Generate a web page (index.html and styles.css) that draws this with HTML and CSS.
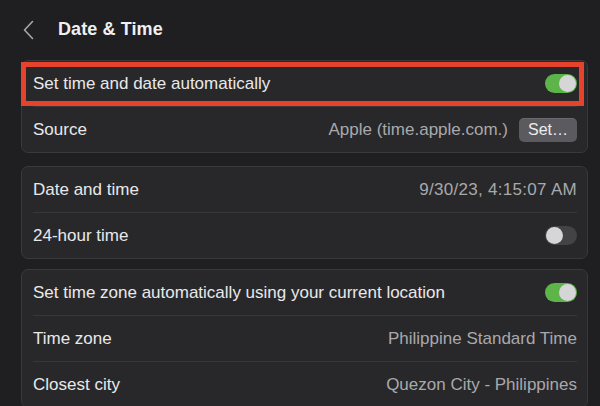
FILE: index.html
```html
<!DOCTYPE html>
<html>
<head>
<meta charset="utf-8">
<link rel="stylesheet" href="styles.css">
</head>
<body>
<div class="page">
  <header class="header">
    <svg class="back" width="14" height="20" viewBox="0 0 14 20"><path d="M10.5 1.5 L2.5 10 L10.5 18.5" fill="none" stroke="#a7a7aa" stroke-width="1.6" stroke-linecap="round" stroke-linejoin="round"/></svg>
    <h1 class="title">Date &amp; Time</h1>
  </header>

  <section class="card first">
    <div class="row highlighted">
      <span class="label">Set time and date automatically</span>
      <span class="toggle on"><span class="knob"></span></span>
      <span class="mark"></span>
    </div>
    <div class="row">
      <span class="label">Source</span>
      <span class="right"><span class="value">Apple (time.apple.com.)</span><span class="btn">Set…</span></span>
    </div>
  </section>

  <section class="card second">
    <div class="row">
      <span class="label">Date and time</span>
      <span class="value date">9/30/23, 4:15:07 AM</span>
    </div>
    <div class="row">
      <span class="label">24-hour time</span>
      <span class="toggle off"><span class="knob"></span></span>
    </div>
  </section>

  <section class="card third">
    <div class="row">
      <span class="label">Set time zone automatically using your current location</span>
      <span class="toggle on"><span class="knob"></span></span>
    </div>
    <div class="row">
      <span class="label">Time zone</span>
      <span class="value">Philippine Standard Time</span>
    </div>
    <div class="row">
      <span class="label">Closest city</span>
      <span class="value">Quezon City - Philippines</span>
    </div>
  </section>
</div>
</body>
</html>
```

FILE: styles.css
```css
html, body {
  margin: 0;
  padding: 0;
  background: #1f1f21;
  width: 600px;
  height: 406px;
  overflow: hidden;
}
.page {
  font-family: "Liberation Sans", Arial, sans-serif;
  color: #e6e6e8;
  padding: 0 12px 0 21px;
  display: flex;
  flex-direction: column;
}
.header {
  height: 47px;
  box-sizing: border-box;
  padding-top: 12px;
  display: flex;
  align-items: center;
  margin-bottom: 13px;
}
.back {
  margin-left: 1px;
  margin-right: 22px;
}
.title {
  margin: 0;
  font-size: 18px;
  font-weight: bold;
  color: #f0f0f2;
  letter-spacing: 0.1px;
}
.card {
  background: #28282a;
  border: 1px solid #39393b;
  border-radius: 7px;
  display: flex;
  flex-direction: column;
}
.card.first { margin-bottom: 13px; }
.card.second { margin-bottom: 10px; }
.row {
  position: relative;
  height: 46px;
  display: flex;
  align-items: center;
  justify-content: space-between;
  margin: 0 10px 0 11px;
  border-top: 1px solid #37373a;
  box-sizing: border-box;
}
.row:first-child {
  border-top: none;
  height: 45px;
}
.label {
  font-size: 17px;
  color: #e8e8ea;
}
.value {
  font-size: 17px;
  color: #a9a9ac;
}
.value.date {
  letter-spacing: 0.3px;
}
.right {
  display: flex;
  align-items: center;
  gap: 11px;
}
.btn {
  background: #5b5b5f;
  color: #ececee;
  font-size: 16px;
  width: 58px;
  height: 24px;
  border-radius: 5px;
  display: flex;
  align-items: center;
  justify-content: center;
  box-sizing: border-box;
  border-top: 1px solid #6a6a6e;
}
.toggle {
  width: 32px;
  height: 19px;
  border-radius: 10px;
  display: flex;
  align-items: center;
  box-sizing: border-box;
  padding: 1px;
}
.toggle.on {
  background: #5db449;
  justify-content: flex-end;
}
.toggle.off {
  background: #434346;
  justify-content: flex-start;
}
.knob {
  width: 17px;
  height: 17px;
  border-radius: 50%;
  background: #d6d6d8;
}
.mark {
  position: absolute;
  left: -12px;
  right: -7px;
  top: 1px;
  bottom: 0;
  border: 5px solid #e5432c;
  pointer-events: none;
}
```
